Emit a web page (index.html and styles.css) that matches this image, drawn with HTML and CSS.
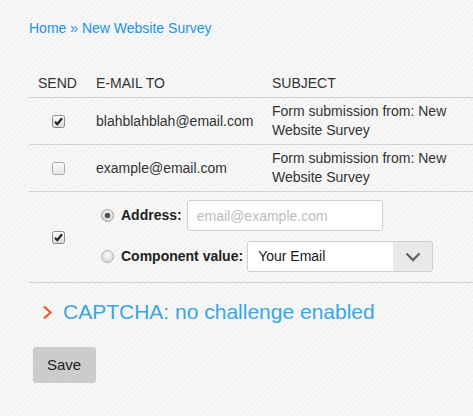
FILE: index.html
```html
<!DOCTYPE html>
<html>
<head>
<meta charset="utf-8">
<link rel="stylesheet" href="styles.css">
</head>
<body>
<div class="page">
  <nav class="crumbs"><a href="#">Home</a> » <a href="#">New Website Survey</a></nav>

  <table class="mail">
    <thead>
      <tr><th class="c-send">SEND</th><th class="c-to">E-MAIL TO</th><th class="c-subj">SUBJECT</th></tr>
    </thead>
    <tbody>
      <tr>
        <td class="c-send"><span class="cb checked"><svg width="13" height="13" viewBox="0 0 13 13"><defs><linearGradient id="g1" x1="0" y1="0" x2="0" y2="1"><stop offset="0" stop-color="#fbfbfb"/><stop offset="1" stop-color="#d9d9d9"/></linearGradient></defs><rect x="0.5" y="0.5" width="12" height="12" rx="2" fill="url(#g1)" stroke="#8a8a8a"/><path d="M3 6.8 L5.3 9.2 L10 3.3" fill="none" stroke="#222" stroke-width="2.2"/></svg></span></td>
        <td class="c-to">blahblahblah@email.com</td>
        <td class="c-subj">Form submission from: New Website Survey</td>
      </tr>
      <tr>
        <td class="c-send"><span class="cb"><svg width="13" height="13" viewBox="0 0 13 13"><defs><linearGradient id="g2" x1="0" y1="0" x2="0" y2="1"><stop offset="0" stop-color="#fdfdfd"/><stop offset="1" stop-color="#e2e2e2"/></linearGradient></defs><rect x="0.5" y="0.5" width="12" height="12" rx="2" fill="url(#g2)" stroke="#a8a8a8"/></svg></span></td>
        <td class="c-to">example@email.com</td>
        <td class="c-subj">Form submission from: New Website Survey</td>
      </tr>
      <tr class="opt-row">
        <td class="c-send"><span class="cb checked"><svg width="13" height="13" viewBox="0 0 13 13"><rect x="0.5" y="0.5" width="12" height="12" rx="2" fill="url(#g1)" stroke="#8a8a8a"/><path d="M3 6.8 L5.3 9.2 L10 3.3" fill="none" stroke="#222" stroke-width="2.2"/></svg></span></td>
        <td colspan="2" class="c-opts">
          <div class="opt">
            <span class="radio"><svg width="13" height="13" viewBox="0 0 13 13"><defs><radialGradient id="rg" cx="0.5" cy="0.4" r="0.6"><stop offset="0" stop-color="#fbfbfb"/><stop offset="1" stop-color="#d6d6d6"/></radialGradient></defs><circle cx="6.5" cy="6.5" r="6" fill="url(#rg)" stroke="#a0a0a0"/><circle cx="6.5" cy="6.5" r="2.8" fill="#555"/></svg></span>
            <span class="opt-label">Address:</span>
            <input class="field" type="text" placeholder="email@example.com">
          </div>
          <div class="opt">
            <span class="radio"><svg width="13" height="13" viewBox="0 0 13 13"><circle cx="6.5" cy="6.5" r="6" fill="url(#rg)" stroke="#b4b4b4"/></svg></span>
            <span class="opt-label">Component value:</span>
            <div class="select">
              <span class="select-value">Your Email</span>
              <span class="select-arrow"><svg width="16" height="10" viewBox="0 0 16 10"><path d="M1.5 1.5 L8 8 L14.5 1.5" fill="none" stroke="#666" stroke-width="2.4"/></svg></span>
            </div>
          </div>
        </td>
      </tr>
    </tbody>
  </table>

  <div class="captcha">
    <svg class="chev" width="11" height="15" viewBox="0 0 11 15"><path d="M2 1.5 L8.5 7.5 L2 13.5" fill="none" stroke="#ef5a2a" stroke-width="2.2"/></svg>
    <span>CAPTCHA: no challenge enabled</span>
  </div>

  <button class="save" type="button">Save</button>
</div>
</body>
</html>
```

FILE: styles.css
```css
html, body {
  margin: 0;
  padding: 0;
}
body {
  font-family: "Liberation Sans", Arial, sans-serif;
  font-size: 14px;
  color: #333;
  background-color: #f4f4f4;
  background-image: repeating-linear-gradient(-45deg, #f2f2f2 0, #f2f2f2 2px, #f8f8f8 2px, #f8f8f8 4px);
  min-height: 416px;
  overflow: hidden;
}
.page {
  padding: 18px 0 0 29px;
}
.crumbs {
  line-height: 21px;
  color: #1b95e0;
  margin-bottom: 31px;
}
.crumbs a {
  color: #1b95e0;
  text-decoration: none;
}
.mail {
  width: 100%;
  border-collapse: collapse;
  table-layout: fixed;
}
.mail th, .mail td {
  padding: 4px 9px;
  line-height: 19px;
  text-align: left;
  vertical-align: middle;
  border-bottom: 1px solid #d2d2d2;
  font-weight: normal;
}
.mail .c-send { width: 40px; }
.mail .c-to { width: 158px; }
.mail td.c-send { text-align: center; }
.cb, .radio {
  display: inline-block;
  width: 13px;
  height: 13px;
  vertical-align: middle;
}
.cb svg, .radio svg { display: block; }
.mail td.c-opts {
  padding: 8px 9px 10px 9px;
}
.opt {
  display: flex;
  align-items: center;
  height: 31px;
}
.opt + .opt {
  margin-top: 10px;
}
.radio {
  margin: 0 7px 0 5px;
}
.opt-label {
  font-weight: bold;
  color: #222;
  margin-right: 5px;
}
.field {
  box-sizing: border-box;
  width: 196px;
  height: 31px;
  border: 1px solid #cfcfcf;
  border-radius: 3px;
  background: #fff;
  padding: 0 9px;
  font-family: "Liberation Sans", Arial, sans-serif;
  font-size: 14px;
  color: #333;
  margin: 0;
}
.field::placeholder {
  color: #bdbdbd;
}
.select {
  box-sizing: border-box;
  width: 186px;
  height: 31px;
  display: flex;
  border: 1px solid #cfcfcf;
  border-radius: 3px;
  background: #fff;
  overflow: hidden;
  margin-left: -1px;
}
.select-value {
  flex: 1;
  padding-left: 10px;
  line-height: 29px;
  color: #1a1a1a;
}
.select-arrow {
  width: 39px;
  background: #e9e9e9;
  display: flex;
  align-items: center;
  justify-content: center;
}
.captcha {
  margin-top: 17px;
  padding-left: 13px;
  display: flex;
  align-items: center;
  line-height: 24px;
  font-size: 21px;
  color: #3aa5e4;
}
.chev {
  margin-right: 10px;
}
.save {
  display: block;
  margin: 23px 0 0 4px;
  padding: 9px 15px 9px 14px;
  line-height: 18px;
  font-family: "Liberation Sans", Arial, sans-serif;
  font-size: 15px;
  color: #222;
  background: #cccccc;
  border: 0;
  border-radius: 3px;
}
```
